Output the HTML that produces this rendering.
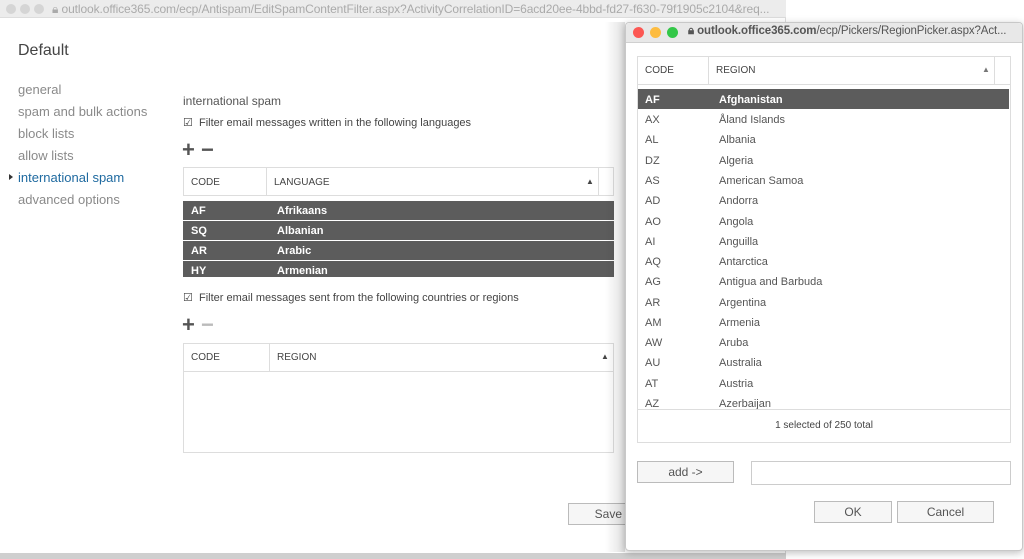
<!DOCTYPE html><html><head><meta charset="utf-8"><style>
*{margin:0;padding:0;box-sizing:border-box}
body{width:1024px;height:559px;overflow:hidden;background:#fff;position:relative;font-family:"Liberation Sans",sans-serif;color:#333}
.a{position:absolute}
.t{font-size:11px;color:#444;position:absolute;white-space:nowrap}
.nav{font-size:13px;color:#8a8a8a;position:absolute;left:18px}
.dark{position:absolute;left:183px;width:431px;height:19px;background:#5c5c5c;color:#fff;font-size:11px;font-weight:bold}
.dark span{position:absolute;top:4px}
.row{position:absolute;left:638px;width:371px;height:20px;font-size:11px;color:#555}
.row span{position:absolute;top:5px}
.btn{position:absolute;background:#f6f6f6;border:1px solid #bbb;font-size:12px;color:#555;text-align:center}
</style></head><body>
<div class="a" style="left:0;top:0;width:786px;height:554px;background:#fff;border-right:1px solid #ddd"></div>
<div class="a" style="left:0;top:0;width:786px;height:18px;background:#ececec;border-bottom:1px solid #ddd"></div>
<div class="a" style="left:0;top:553px;width:786px;height:6px;background:#cfcfcf"></div>
<div class="a" style="left:6px;top:4px;width:10px;height:10px;border-radius:50%;background:#d5d5d5"></div>
<div class="a" style="left:20px;top:4px;width:10px;height:10px;border-radius:50%;background:#d5d5d5"></div>
<div class="a" style="left:34px;top:4px;width:10px;height:10px;border-radius:50%;background:#d5d5d5"></div>
<div class="t" style="left:52px;top:2px;font-size:12px;color:#aaa;letter-spacing:-0.1px">🔒︎ outlook.office365.com/ecp/Antispam/EditSpamContentFilter.aspx?ActivityCorrelationID=6acd20ee-4bbd-fd27-f630-79f1905c2104&amp;req...</div>
<div class="a" style="left:18px;top:42px;font-size:16px;color:#444">Default</div>
<div class="nav" style="top:82px">general</div>
<div class="nav" style="top:104px">spam and bulk actions</div>
<div class="nav" style="top:126px">block lists</div>
<div class="nav" style="top:148px">allow lists</div>
<div class="a" style="left:9px;top:174px;border-left:4px solid #333;border-top:3px solid transparent;border-bottom:3px solid transparent"></div>
<div class="nav" style="top:170px;color:#1f6aa0">international spam</div>
<div class="nav" style="top:192px">advanced options</div>
<div class="a" style="left:183px;top:94px;font-size:12px;color:#555">international spam</div>
<div class="t" style="left:183px;top:116px">☑&nbsp; Filter email messages written in the following languages</div>
<div class="a" style="left:182px;top:139px;font-size:22px;font-weight:bold;color:#555;line-height:22px">+ −</div>
<div class="a" style="left:183px;top:167px;width:431px;height:29px;border:1px solid #ddd"></div>
<div class="a" style="left:266px;top:168px;width:1px;height:27px;background:#ddd"></div>
<div class="a" style="left:598px;top:168px;width:1px;height:27px;background:#ddd"></div>
<div class="t" style="left:191px;top:177px;font-size:10px">CODE</div>
<div class="t" style="left:274px;top:177px;font-size:10px">LANGUAGE</div>
<div class="t" style="left:586px;top:177px;font-size:8px">▲</div>
<div class="dark" style="top:201px"><span style="left:8px">AF</span><span style="left:94px">Afrikaans</span></div>
<div class="dark" style="top:221px"><span style="left:8px">SQ</span><span style="left:94px">Albanian</span></div>
<div class="dark" style="top:241px"><span style="left:8px">AR</span><span style="left:94px">Arabic</span></div>
<div class="dark" style="top:261px;height:16px;overflow:hidden"><span style="left:8px">HY</span><span style="left:94px">Armenian</span></div>
<div class="t" style="left:183px;top:291px">☑&nbsp; Filter email messages sent from the following countries or regions</div>
<div class="a" style="left:182px;top:314px;font-size:22px;font-weight:bold;color:#555;line-height:22px">+ <span style="color:#bbb">−</span></div>
<div class="a" style="left:183px;top:343px;width:431px;height:110px;border:1px solid #ddd"></div>
<div class="a" style="left:183px;top:371px;width:431px;height:1px;background:#ddd"></div>
<div class="a" style="left:269px;top:344px;width:1px;height:27px;background:#ddd"></div>
<div class="t" style="left:191px;top:352px;font-size:10px">CODE</div>
<div class="t" style="left:277px;top:352px;font-size:10px">REGION</div>
<div class="t" style="left:601px;top:352px;font-size:8px">▲</div>
<div class="btn" style="left:568px;top:503px;width:80px;height:22px;line-height:20px;text-align:right;padding-right:25px">Save</div>
<div class="a" style="left:605px;top:22px;width:20px;height:530px;background:linear-gradient(90deg,rgba(0,0,0,0),rgba(0,0,0,.12))"></div>
<div class="a" style="left:625px;top:22px;width:398px;height:529px;background:#fff;border:1px solid #c8c8c8;border-radius:4px;box-shadow:0 2px 8px rgba(0,0,0,.25)"></div>
<div class="a" style="left:626px;top:23px;width:396px;height:20px;background:#e8e8e8;border-bottom:1px solid #d0d0d0;border-radius:4px 4px 0 0"></div>
<div class="a" style="left:633px;top:27px;width:11px;height:11px;border-radius:50%;background:#fc5753"></div>
<div class="a" style="left:650px;top:27px;width:11px;height:11px;border-radius:50%;background:#fdbc40"></div>
<div class="a" style="left:667px;top:27px;width:11px;height:11px;border-radius:50%;background:#33c748"></div>
<div class="t" style="left:688px;top:25px;font-size:11.5px;font-weight:bold;color:#555;letter-spacing:-0.1px">🔒︎ outlook.office365.com<span style="font-weight:normal">/ecp/Pickers/RegionPicker.aspx?Act...</span></div>
<div class="a" style="left:637px;top:56px;width:374px;height:387px;border:1px solid #ddd"></div>
<div class="a" style="left:638px;top:84px;width:372px;height:1px;background:#ddd"></div>
<div class="a" style="left:708px;top:57px;width:1px;height:27px;background:#ddd"></div>
<div class="a" style="left:994px;top:57px;width:1px;height:27px;background:#ddd"></div>
<div class="a" style="left:638px;top:409px;width:372px;height:1px;background:#ddd"></div>
<div class="t" style="left:645px;top:65px;font-size:10px">CODE</div>
<div class="t" style="left:716px;top:65px;font-size:10px">REGION</div>
<div class="t" style="left:982px;top:65px;font-size:8px;color:#777">▲</div>
<div class="row" style="top:89px;background:#5c5c5c;color:#fff;font-weight:bold"><span style="left:7px">AF</span><span style="left:81px">Afghanistan</span></div>
<div class="row" style="top:109px"><span style="left:7px">AX</span><span style="left:81px">Åland Islands</span></div>
<div class="row" style="top:129px"><span style="left:7px">AL</span><span style="left:81px">Albania</span></div>
<div class="row" style="top:150px"><span style="left:7px">DZ</span><span style="left:81px">Algeria</span></div>
<div class="row" style="top:170px"><span style="left:7px">AS</span><span style="left:81px">American Samoa</span></div>
<div class="row" style="top:190px"><span style="left:7px">AD</span><span style="left:81px">Andorra</span></div>
<div class="row" style="top:211px"><span style="left:7px">AO</span><span style="left:81px">Angola</span></div>
<div class="row" style="top:231px"><span style="left:7px">AI</span><span style="left:81px">Anguilla</span></div>
<div class="row" style="top:251px"><span style="left:7px">AQ</span><span style="left:81px">Antarctica</span></div>
<div class="row" style="top:271px"><span style="left:7px">AG</span><span style="left:81px">Antigua and Barbuda</span></div>
<div class="row" style="top:292px"><span style="left:7px">AR</span><span style="left:81px">Argentina</span></div>
<div class="row" style="top:312px"><span style="left:7px">AM</span><span style="left:81px">Armenia</span></div>
<div class="row" style="top:332px"><span style="left:7px">AW</span><span style="left:81px">Aruba</span></div>
<div class="row" style="top:352px"><span style="left:7px">AU</span><span style="left:81px">Australia</span></div>
<div class="row" style="top:373px"><span style="left:7px">AT</span><span style="left:81px">Austria</span></div>
<div class="row" style="top:393px;height:16px;overflow:hidden"><span style="left:7px">AZ</span><span style="left:81px">Azerbaijan</span></div>
<div class="t" style="left:638px;top:420px;width:372px;text-align:center;font-size:10px">1 selected of 250 total</div>
<div class="btn" style="left:637px;top:461px;width:97px;height:22px;line-height:20px">add -&gt;</div>
<div class="a" style="left:751px;top:461px;width:260px;height:24px;border:1px solid #ccc"></div>
<div class="btn" style="left:814px;top:501px;width:78px;height:22px;line-height:20px">OK</div>
<div class="btn" style="left:897px;top:501px;width:97px;height:22px;line-height:20px">Cancel</div>
</body></html>
